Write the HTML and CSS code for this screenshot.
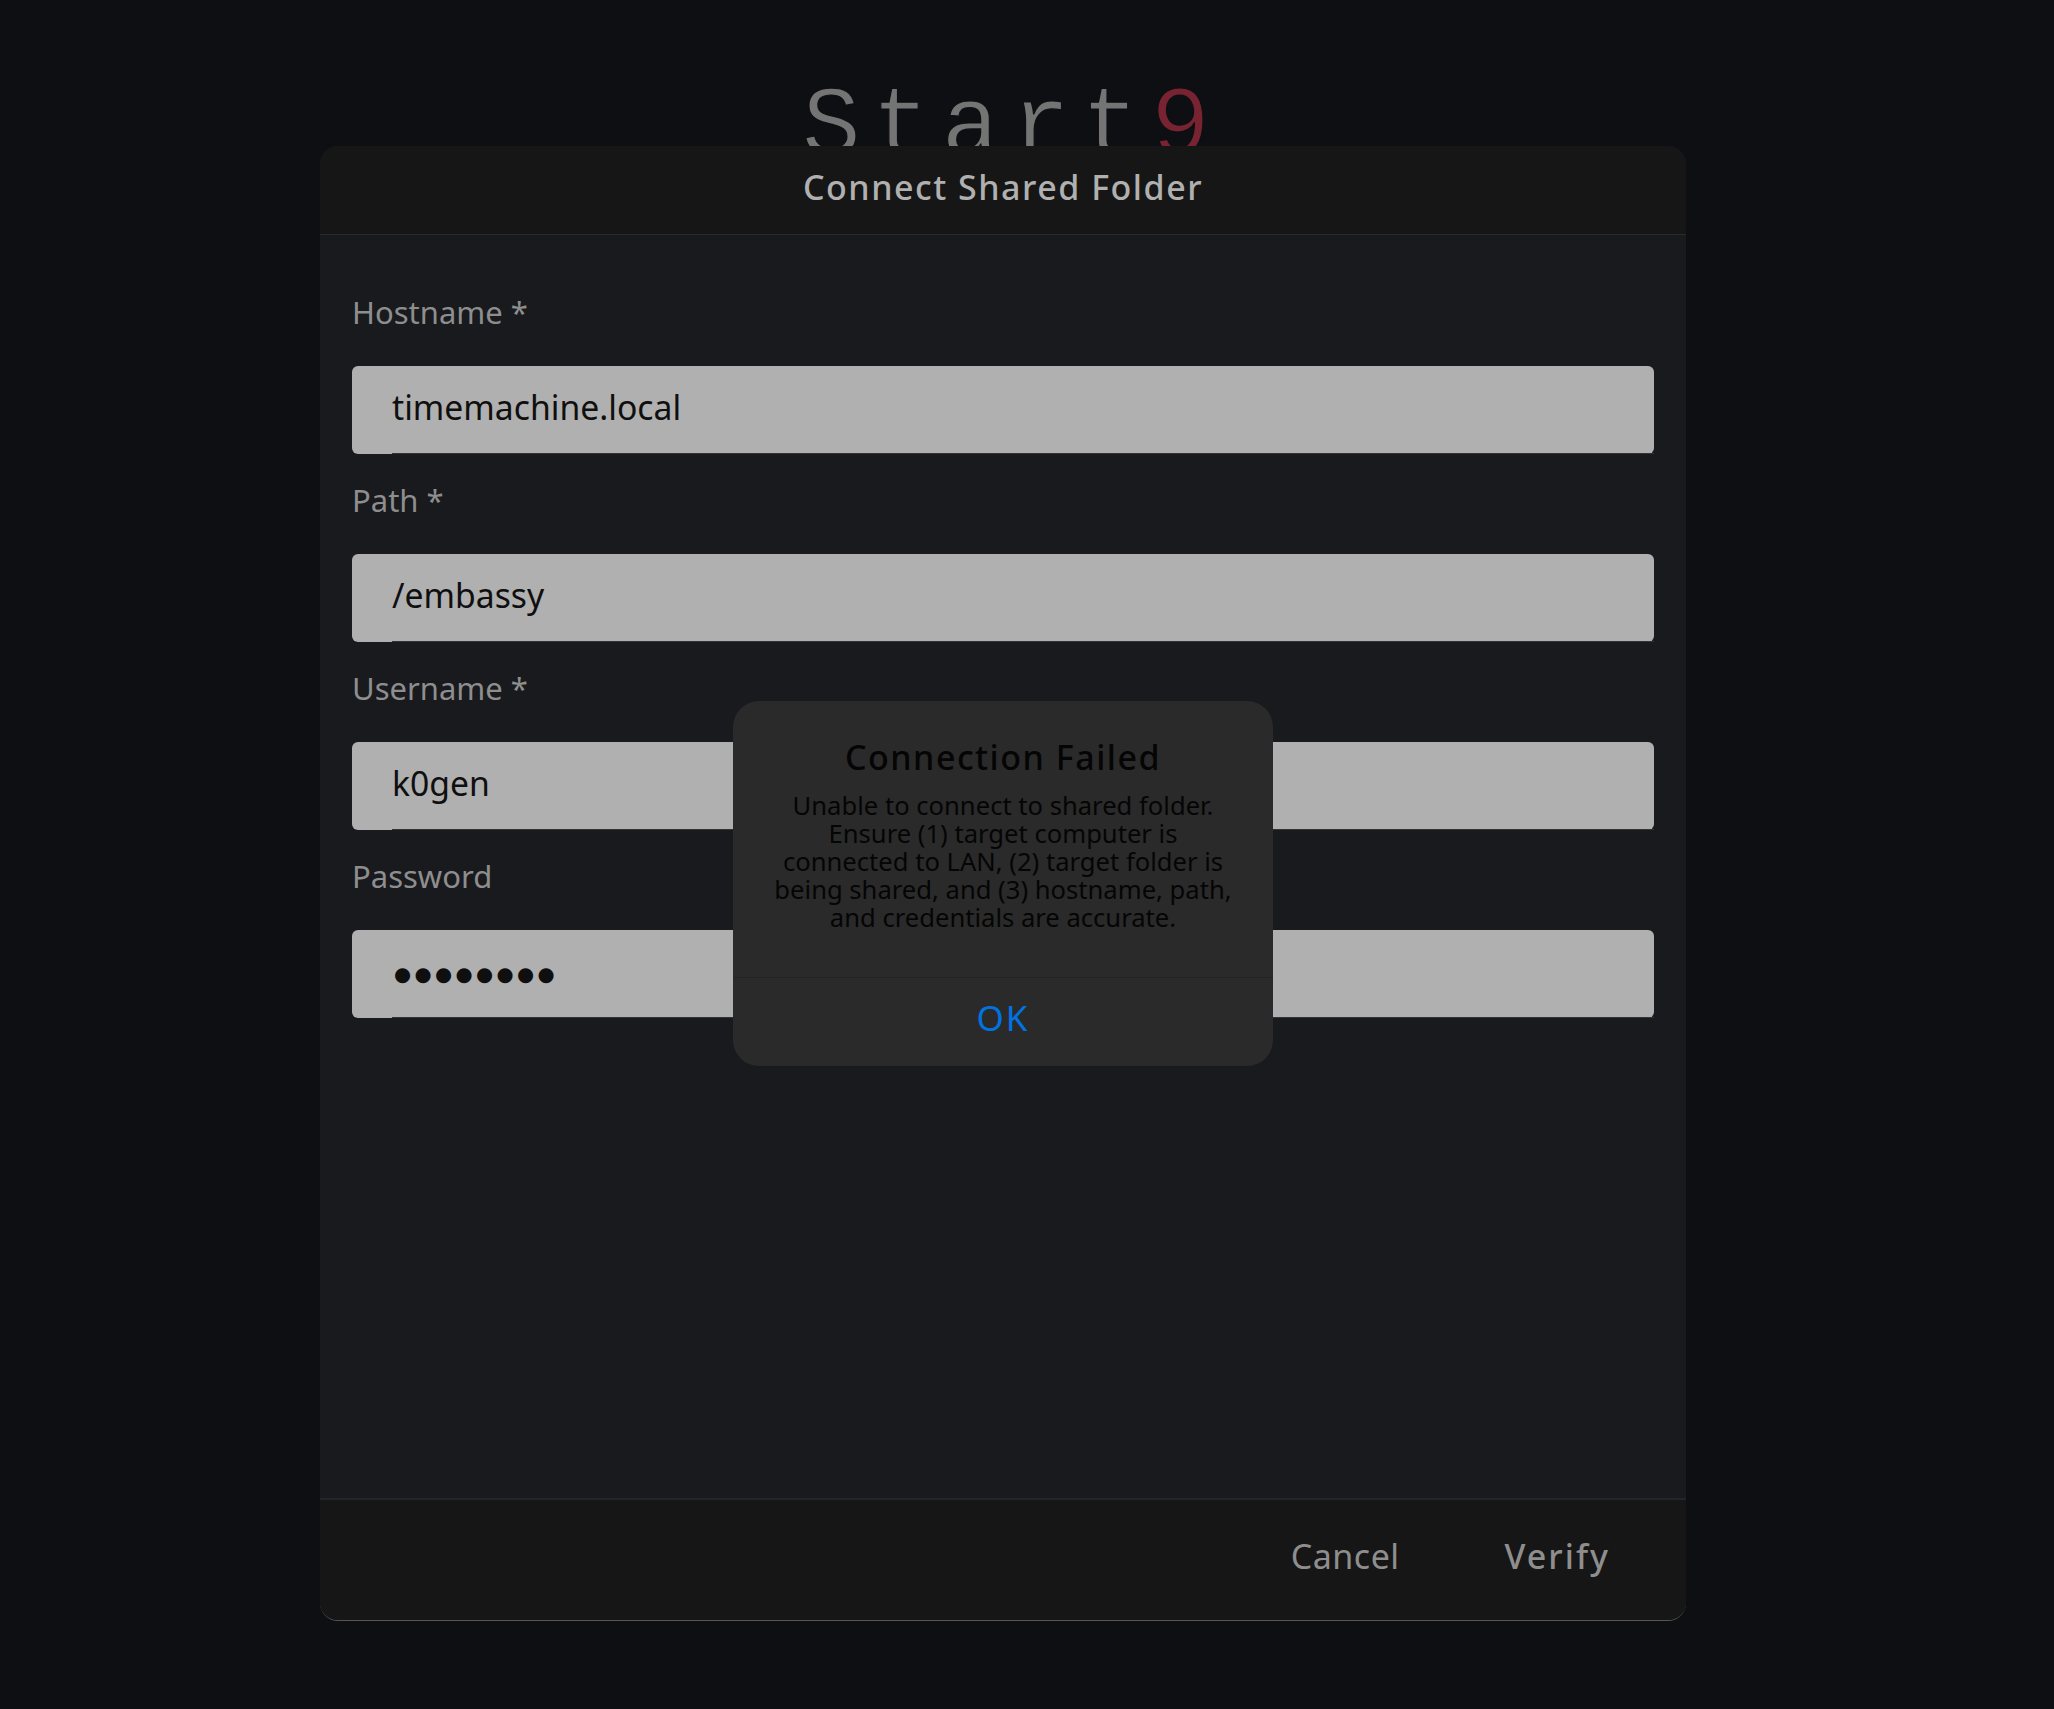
FILE: index.html
```html
<!DOCTYPE html>
<html lang="en">
<head>
<meta charset="utf-8">
<title>Connect Shared Folder</title>
<link rel="stylesheet" href="styles.css">
</head>
<body>
<div class="logo">Start<span class="logo-nine">9</span></div>
<main class="modal">
  <header class="modal-header"><h1 class="modal-title">Connect Shared Folder</h1></header>
  <form class="modal-body">
    <label class="field-label" for="hostname">Hostname *</label>
    <div class="field"><input class="field-input" id="hostname" type="text" value="timemachine.local"></div>
    <label class="field-label" for="path">Path *</label>
    <div class="field"><input class="field-input" id="path" type="text" value="/embassy"></div>
    <label class="field-label" for="username">Username *</label>
    <div class="field"><input class="field-input" id="username" type="text" value="k0gen"></div>
    <label class="field-label" for="password">Password</label>
    <div class="field"><input class="field-input field-input-secret" id="password" type="text" value="●●●●●●●●"></div>
  </form>
  <footer class="modal-footer">
    <button class="footer-btn" type="button">Cancel</button>
    <button class="footer-btn footer-btn-strong" type="button">Verify</button>
  </footer>
</main>
<div class="alert" role="alertdialog">
  <div class="alert-content">
    <h2 class="alert-title">Connection Failed</h2>
    <p class="alert-message">Unable to connect to shared folder. Ensure (1) target computer is connected to LAN, (2) target folder is being shared, and (3) hostname, path, and credentials are accurate.</p>
  </div>
  <button class="alert-btn" type="button">OK</button>
</div>
</body>
</html>
```
FILE: styles.css
```css
* { box-sizing: border-box; }
html, body { margin: 0; height: 100%; }
body {
  position: relative;
  min-height: 1709px;
  background: #0e0f12;
  font-family: "Noto Sans", "Open Sans", sans-serif;
  padding: 146px 368px 0 320px;
  overflow: hidden;
}
.logo {
  position: absolute;
  top: 71px;
  left: 802px;
  font-family: "Liberation Mono", monospace;
  font-size: 98px;
  line-height: 113px;
  letter-spacing: 11px;
  color: #747474;
  -webkit-text-stroke: 1.2px #0e0f12;
  white-space: nowrap;
}
.logo-nine { color: #772331; }
.modal {
  position: relative;
  width: 1366px;
  height: 1475px;
  display: flex;
  flex-direction: column;
  border-radius: 18px;
  overflow: hidden;
  background: #191a1e;
  border-bottom: 1px solid #555;
}
.modal-header {
  height: 89px;
  flex: none;
  background: #161616;
  border-bottom: 1px solid #2a2a2a;
  display: flex;
  justify-content: center;
  padding-top: 21px;
}
.modal-title {
  margin: 0;
  font-size: 34px;
  line-height: 40px;
  font-weight: 500;
  letter-spacing: 1.5px;
  color: #b0b0b0;
}
.modal-body {
  flex: 1;
  padding: 56px 32px 0;
  display: flex;
  flex-direction: column;
}
.field-label {
  height: 42px;
  margin-bottom: 33px;
  font-size: 31px;
  line-height: 42px;
  color: #8e8e8e;
}
.field {
  height: 88px;
  margin-bottom: 25px;
  background: #b0b0b0;
  border-radius: 6px;
  padding-left: 40px;
}
.field-input {
  display: block;
  width: 100%;
  height: 88px;
  border: 0;
  border-bottom: 1px solid #333;
  padding: 0 0 6px;
  margin: 0;
  background: transparent;
  font: inherit;
  font-size: 33.7px;
  color: #0f0f0f;
  outline: none;
}
.field-input-secret {
  font-family: "DejaVu Sans", sans-serif;
  font-size: 19.6px;
  letter-spacing: 3.4px;
  padding: 2px 0 0 2px;
}
.modal-footer {
  height: 122px;
  flex: none;
  background: #161616;
  border-top: 2px solid #24252a;
  display: flex;
  justify-content: flex-end;
  align-items: center;
  gap: 105px;
  padding: 0 76px 8px 0;
}
.footer-btn {
  border: 0;
  padding: 0;
  background: none;
  font: inherit;
  font-size: 34px;
  color: #8e8e8e;
  letter-spacing: 0.5px;
}
.footer-btn-strong { font-weight: 500; letter-spacing: 2px; }
.alert {
  position: absolute;
  left: 733px;
  top: 701px;
  width: 540px;
  height: 365px;
  background: #2a2a2a;
  border-radius: 26px;
  display: flex;
  flex-direction: column;
}
.alert-content {
  flex: 1;
  padding: 35px 38px 0;
  text-align: center;
  color: #050505;
}
.alert-title {
  margin: 0 0 14px;
  font-size: 34px;
  line-height: 42px;
  font-weight: 500;
  letter-spacing: 1.5px;
}
.alert-message {
  margin: 0;
  font-size: 25.6px;
  line-height: 28px;
}
.alert-btn {
  height: 89px;
  flex: none;
  border: 0;
  border-top: 1px solid #232323;
  background: none;
  font: inherit;
  font-size: 35px;
  letter-spacing: 2px;
  color: #0073e0;
  padding: 0 0 9px;
}
```
